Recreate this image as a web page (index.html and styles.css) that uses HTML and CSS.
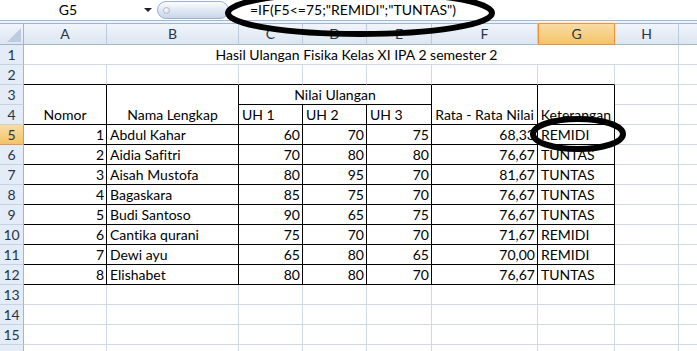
FILE: index.html
```html
<!DOCTYPE html>
<html>
<head>
<meta charset="utf-8">
<link rel="stylesheet" href="styles.css">
</head>
<body>
<div class="app">
  <div class="formula-bar">
    <div class="name-box">G5</div>
    <span class="caret"></span>
    <div class="pill"><span class="dot"></span></div>
    <div class="formula">=IF(F5&lt;=75;"REMIDI";"TUNTAS")</div>
  </div>
  <div class="sep"></div>
  <div class="sheet">
    <div class="h corner"><svg width="14" height="14" viewBox="0 0 14 14"><polygon points="14,0 14,14 0,14" fill="#BCCBDD"/></svg></div>
    <div class="h">A</div><div class="h">B</div><div class="h">C</div><div class="h">D</div><div class="h">E</div><div class="h">F</div><div class="h sel">G</div><div class="h">H</div><div class="h"></div>

    <div class="rh">1</div>
    <div class="c title">Hasil Ulangan Fisika Kelas XI IPA 2 semester 2</div><div class="c"></div>

    <div class="rh">2</div>
    <div class="c tb"></div><div class="c tb"></div><div class="c tb"></div><div class="c tb"></div><div class="c tb"></div><div class="c tb"></div><div class="c tb"></div><div class="c"></div><div class="c"></div>

    <div class="rh">3</div>
    <div class="c tb tr m2 mid">Nomor</div>
    <div class="c tb tr m2 mid">Nama Lengkap</div>
    <div class="c tb tr span3 mid">Nilai Ulangan</div>
    <div class="c tb tr m2 mid">Rata - Rata Nilai</div>
    <div class="c tb tr m2 mid">Keterangan</div>
    <div class="c"></div><div class="c"></div>

    <div class="rh">4</div>
    <div class="c tb tr">UH 1</div><div class="c tb tr">UH 2</div><div class="c tb tr">UH 3</div>
    <div class="c"></div><div class="c"></div>

    <div class="rh sel">5</div>
    <div class="c tb tr n">1</div><div class="c tb tr">Abdul Kahar</div><div class="c tb tr n">60</div><div class="c tb tr n">70</div><div class="c tb tr n">75</div><div class="c tb tr n">68,33</div><div class="c tb tr">REMIDI</div><div class="c"></div><div class="c"></div>

    <div class="rh">6</div>
    <div class="c tb tr n">2</div><div class="c tb tr">Aidia Safitri</div><div class="c tb tr n">70</div><div class="c tb tr n">80</div><div class="c tb tr n">80</div><div class="c tb tr n">76,67</div><div class="c tb tr">TUNTAS</div><div class="c"></div><div class="c"></div>

    <div class="rh">7</div>
    <div class="c tb tr n">3</div><div class="c tb tr">Aisah Mustofa</div><div class="c tb tr n">80</div><div class="c tb tr n">95</div><div class="c tb tr n">70</div><div class="c tb tr n">81,67</div><div class="c tb tr">TUNTAS</div><div class="c"></div><div class="c"></div>

    <div class="rh">8</div>
    <div class="c tb tr n">4</div><div class="c tb tr">Bagaskara</div><div class="c tb tr n">85</div><div class="c tb tr n">75</div><div class="c tb tr n">70</div><div class="c tb tr n">76,67</div><div class="c tb tr">TUNTAS</div><div class="c"></div><div class="c"></div>

    <div class="rh">9</div>
    <div class="c tb tr n">5</div><div class="c tb tr">Budi Santoso</div><div class="c tb tr n">90</div><div class="c tb tr n">65</div><div class="c tb tr n">75</div><div class="c tb tr n">76,67</div><div class="c tb tr">TUNTAS</div><div class="c"></div><div class="c"></div>

    <div class="rh">10</div>
    <div class="c tb tr n">6</div><div class="c tb tr">Cantika qurani</div><div class="c tb tr n">75</div><div class="c tb tr n">70</div><div class="c tb tr n">70</div><div class="c tb tr n">71,67</div><div class="c tb tr">REMIDI</div><div class="c"></div><div class="c"></div>

    <div class="rh">11</div>
    <div class="c tb tr n">7</div><div class="c tb tr">Dewi ayu</div><div class="c tb tr n">65</div><div class="c tb tr n">80</div><div class="c tb tr n">65</div><div class="c tb tr n">70,00</div><div class="c tb tr">REMIDI</div><div class="c"></div><div class="c"></div>

    <div class="rh">12</div>
    <div class="c tb tr n">8</div><div class="c tb tr">Elishabet</div><div class="c tb tr n">80</div><div class="c tb tr n">80</div><div class="c tb tr n">70</div><div class="c tb tr n">76,67</div><div class="c tb tr">TUNTAS</div><div class="c"></div><div class="c"></div>

    <div class="rh">13</div>
    <div class="c"></div><div class="c"></div><div class="c"></div><div class="c"></div><div class="c"></div><div class="c"></div><div class="c"></div><div class="c"></div><div class="c"></div>
    <div class="rh">14</div>
    <div class="c"></div><div class="c"></div><div class="c"></div><div class="c"></div><div class="c"></div><div class="c"></div><div class="c"></div><div class="c"></div><div class="c"></div>
    <div class="rh">15</div>
    <div class="c"></div><div class="c"></div><div class="c"></div><div class="c"></div><div class="c"></div><div class="c"></div><div class="c"></div><div class="c"></div><div class="c"></div>
    <div class="rh"></div>
    <div class="c"></div><div class="c"></div><div class="c"></div><div class="c"></div><div class="c"></div><div class="c"></div><div class="c"></div><div class="c"></div><div class="c"></div>
  </div>
  <svg class="ink" width="697" height="351" viewBox="0 0 697 351">
    <ellipse cx="360" cy="13" rx="132" ry="21" fill="none" stroke="#000" stroke-width="6"/>
    <ellipse cx="578" cy="134" rx="45" ry="15" fill="none" stroke="#000" stroke-width="6"/>
  </svg>
</div>
</body>
</html>
```
FILE: styles.css
```css
html, body {
  margin: 0;
  padding: 0;
  background: #fff;
  overflow: hidden;
}
.app {
  position: relative;
  width: 697px;
  height: 351px;
  overflow: hidden;
  font-family: "Lato", "Liberation Sans", sans-serif;
  font-size: 14px;
  font-variant-ligatures: none;
  color: #000;
}
.formula-bar {
  height: 20px;
  display: flex;
  align-items: center;
  background: #fff;
}
.name-box {
  width: 136px;
  text-align: center;
  line-height: 20px;
}
.caret {
  margin-left: 8px;
  width: 0;
  height: 0;
  border-left: 4px solid transparent;
  border-right: 4px solid transparent;
  border-top: 4px solid #222;
}
.pill {
  margin-left: 5px;
  width: 72px;
  height: 18px;
  box-sizing: border-box;
  border: 1px solid #9BB1CF;
  border-radius: 10px;
  background: linear-gradient(#FBFCFE, #DCE5F2 60%, #C9D6EA);
  display: flex;
  align-items: center;
  padding-left: 5px;
}
.dot {
  width: 7px;
  height: 7px;
  border-radius: 50%;
  background: radial-gradient(circle at 40% 40%, #fff, #C8CED8);
  border: 1px solid #B5BDCA;
  box-sizing: border-box;
}
.formula {
  margin-left: 21px;
  line-height: 20px;
  white-space: nowrap;
}
.sep {
  height: 2px;
  border-top: 1px solid #A3B7D1;
  background: #EEF3FA;
}
.sheet {
  display: grid;
  grid-template-columns: 24px 83px 132px 64px 64px 65px 106px 77px 64px 64px;
  grid-template-rows: 22px repeat(16, 20px);
}
.h {
  box-sizing: border-box;
  border-top: 1px solid #9EB6CE;
  border-bottom: 1px solid #9EB6CE;
  border-right: 1px solid #BCCBDD;
  background: linear-gradient(#F1F5FB, #DCE5F1);
  color: #27354A;
  text-align: center;
  line-height: 20px;
}
.corner {
  display: flex;
  align-items: flex-end;
  justify-content: flex-end;
  padding: 0 2px 2px 0;
  border-right-color: #9EB6CE;
}
.h.sel {
  background: linear-gradient(#F9DCA4, #F2C468);
  border: 1px solid #F29436;
}
.rh {
  grid-column: 1;
  box-sizing: border-box;
  border-right: 1px solid #9EB6CE;
  border-bottom: 1px solid #C5D3E6;
  background: #E4ECF7;
  color: #27354A;
  text-align: center;
  line-height: 19px;
}
.rh.sel {
  background: linear-gradient(#F9DCA4, #F2C468);
  border-right-color: #F29436;
  border-bottom-color: #F29436;
}
.c {
  box-sizing: border-box;
  border-right: 1px solid #D0D7E5;
  border-bottom: 1px solid #D0D7E5;
  padding: 0 3px;
  line-height: 19px;
  white-space: nowrap;
  overflow: hidden;
}
.title {
  grid-column: span 8;
  text-align: center;
  padding-left: 14px;
}
.tb { border-bottom-color: #000; }
.tr { border-right-color: #000; }
.n { text-align: right; padding-right: 2px; }
.m2 {
  grid-row: span 2;
  display: flex;
  align-items: flex-end;
  justify-content: center;
}
.span3 { grid-column: span 3; }
.mid { text-align: center; }
.ink {
  position: absolute;
  left: 0;
  top: 0;
  pointer-events: none;
}
```
